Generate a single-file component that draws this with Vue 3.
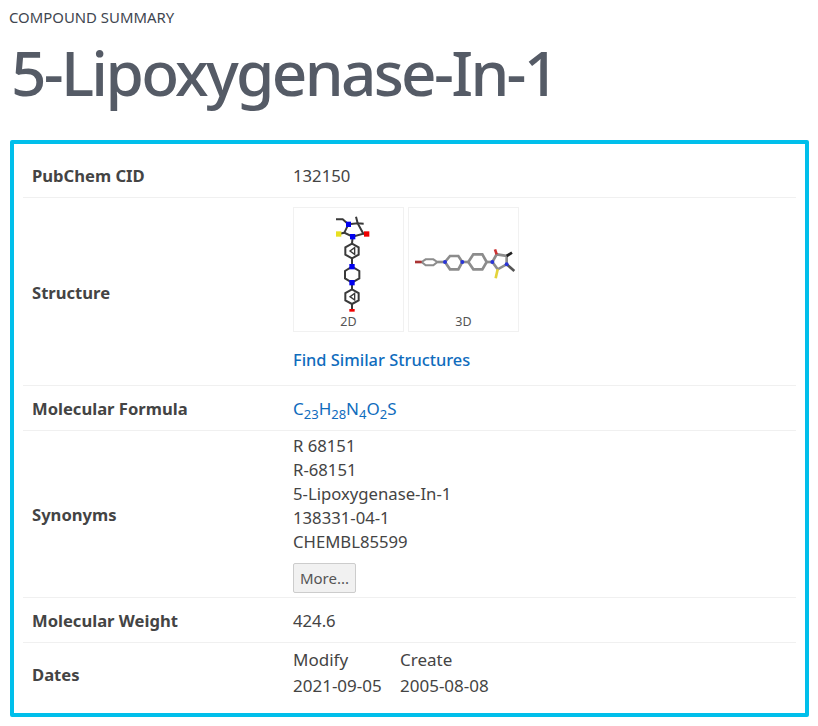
<script setup>
const synonyms = ['R 68151', 'R-68151', '5-Lipoxygenase-In-1', '138331-04-1', 'CHEMBL85599']
</script>

<template>
  <div class="page">
    <div class="kicker">COMPOUND SUMMARY</div>
    <h1 class="title">5-Lipoxygenase-In-1</h1>

    <div class="panel">
      <div class="row">
        <div class="label">PubChem CID</div>
        <div class="value">132150</div>
      </div>

      <div class="row">
        <div class="label">Structure</div>
        <div class="value structure">
          <div class="thumbs">
            <div class="thumb">
              <svg class="mol" viewBox="24 21 330 324" width="110" height="108">
                <g fill="none" stroke="#3a3a3a" stroke-width="6">
                  <path d="M150 55H170L187 70" />
                  <path d="M187 70L215 67L232 98L200 107L175 95Z" />
                  <path d="M215 67L210 47M215 67L233 68" />
                  <path d="M175 95L157 99M232 98L243 99" />
                  <path d="M200 107L198 128" />
                  <path d="M198 128L218 139V161L198 172L178 161V139Z" />
                  <path d="M206 140L192 150L206 160Z" stroke-width="4" />
                  <path d="M198 172V197" />
                  <path d="M198 197L220 210V232L198 245L177 232V210Z" />
                  <path d="M198 245V265" />
                  <path d="M198 265L218 276V298L198 309L178 298V276Z" />
                  <path d="M206 277L192 287L206 297Z" stroke-width="4" />
                  <path d="M198 309V324" />
                </g>
                <rect x="180" y="62" width="15" height="16" fill="#0000ee" />
                <rect x="192" y="99" width="16" height="16" fill="#0000ee" />
                <rect x="150" y="91" width="16" height="16" fill="#e8e020" />
                <rect x="234" y="91" width="16" height="16" fill="#ee0000" />
                <rect x="190" y="189" width="16" height="16" fill="#0000ee" />
                <rect x="190" y="237" width="16" height="16" fill="#0000ee" />
                <rect x="190" y="324" width="16" height="8" fill="#ee0000" />
              </svg>
              <span class="thumb-label">2D</span>
            </div>
            <div class="thumb">
              <svg class="mol" viewBox="12 21 330 324" width="110" height="108">
                <g fill="none" stroke="#8c8c8c" stroke-width="8">
                  <path d="M50 183L62 175H85L97 183L85 193H62Z" stroke-width="6" />
                  <path d="M97 183H120" />
                  <path d="M120 183L135 165H160L172 183L160 205H135Z" />
                  <path d="M172 183H190" />
                  <path d="M190 183L205 160H232L245 183L232 205H205Z" />
                  <path d="M245 183H262" />
                  <path d="M262 183L275 160L305 165V190L278 205Z" />
                </g>
                <path d="M30 183H50" stroke="#a33" stroke-width="8" />
                <path d="M275 160L270 145" stroke="#c33" stroke-width="8" />
                <path d="M278 205L272 232" stroke="#e3d33a" stroke-width="8" />
                <path d="M305 165L321 155" stroke="#222" stroke-width="8" />
                <path d="M305 190L328 210" stroke="#555" stroke-width="8" />
                <g fill="#2a35d8">
                  <circle cx="120" cy="183" r="6" />
                  <circle cx="172" cy="183" r="6" />
                  <circle cx="262" cy="183" r="6" />
                  <circle cx="305" cy="190" r="6" />
                </g>
              </svg>
              <span class="thumb-label">3D</span>
            </div>
          </div>
          <a class="link similar" href="#">Find Similar Structures</a>
        </div>
      </div>

      <div class="row">
        <div class="label">Molecular Formula</div>
        <div class="value">
          <a class="link formula" href="#">C<sub>23</sub>H<sub>28</sub>N<sub>4</sub>O<sub>2</sub>S</a>
        </div>
      </div>

      <div class="row">
        <div class="label">Synonyms</div>
        <div class="value synonyms">
          <div v-for="name in synonyms" :key="name">{{ name }}</div>
          <button class="more" type="button">More...</button>
        </div>
      </div>

      <div class="row">
        <div class="label">Molecular Weight</div>
        <div class="value">424.6</div>
      </div>

      <div class="row">
        <div class="label">Dates</div>
        <div class="value dates">
          <span>Modify</span>
          <span>Create</span>
          <span>2021-09-05</span>
          <span>2005-08-08</span>
        </div>
      </div>
    </div>
  </div>
</template>

<style>
body {
  background: #fff;
}
</style>

<style scoped>
.page {
  width: 818px;
  height: 726px;
  box-sizing: border-box;
  padding: 8px 9px 0 10px;
  font-family: "Noto Sans", "Open Sans", "Liberation Sans", sans-serif;
  font-size: 16.7px;
  line-height: 24px;
  color: #444;
  overflow: hidden;
}

.kicker {
  font-size: 14.9px;
  line-height: 19px;
  margin-left: -1px;
  color: #3f4650;
}

.title {
  margin: 9px 0 32px 1px;
  font-size: 62px;
  line-height: 72px;
  font-weight: 500;
  letter-spacing: -2.7px;
  color: #555b66;
}

.panel {
  width: 799px;
  height: 577px;
  box-sizing: border-box;
  border: 4px solid #00bfeb;
  border-radius: 2px;
  padding: 9px 9px 0;
}

.row {
  display: grid;
  grid-template-columns: 270px 1fr;
  align-items: center;
  border-bottom: 1px solid #f0f0f0;
}

.row:last-child {
  border-bottom: none;
}

.value {
  padding: 11px 0 9px;
}

.structure {
  padding: 9px 0 13px;
}

.synonyms {
  padding: 3px 0 4px;
}

.label {
  padding: 2px 0 0 9px;
  font-size: 16.6px;
  font-weight: 700;
}

.thumbs {
  display: flex;
  gap: 4px;
  margin-bottom: 16px;
}

.thumb {
  width: 111px;
  height: 125px;
  box-sizing: border-box;
  border: 1px solid #f1f1f1;
  display: flex;
  flex-direction: column;
  align-items: center;
}

.mol {
  display: block;
  flex: none;
  filter: blur(0.4px);
}

.thumb-label {
  font-size: 12.5px;
  line-height: 12px;
  color: #555;
}

.link {
  color: #0f6cbd;
  text-decoration: none;
}

.similar {
  font-size: 16.4px;
  font-weight: 500;
}

.formula {
  font-size: 17px;
}

.formula sub {
  font-size: 13px;
  line-height: 0;
}

.more {
  display: block;
  margin-top: 9px;
  width: 63px;
  height: 30px;
  padding: 0;
  box-sizing: border-box;
  border: 1px solid #ccc;
  border-radius: 2px;
  background: #f1f1f1;
  color: #555;
  font: inherit;
  font-size: 15px;
}

.dates {
  display: grid;
  grid-template-columns: 107px 1fr;
  padding: 4px 0 6px;
  font-size: 17px;
  line-height: 26px;
}
</style>
